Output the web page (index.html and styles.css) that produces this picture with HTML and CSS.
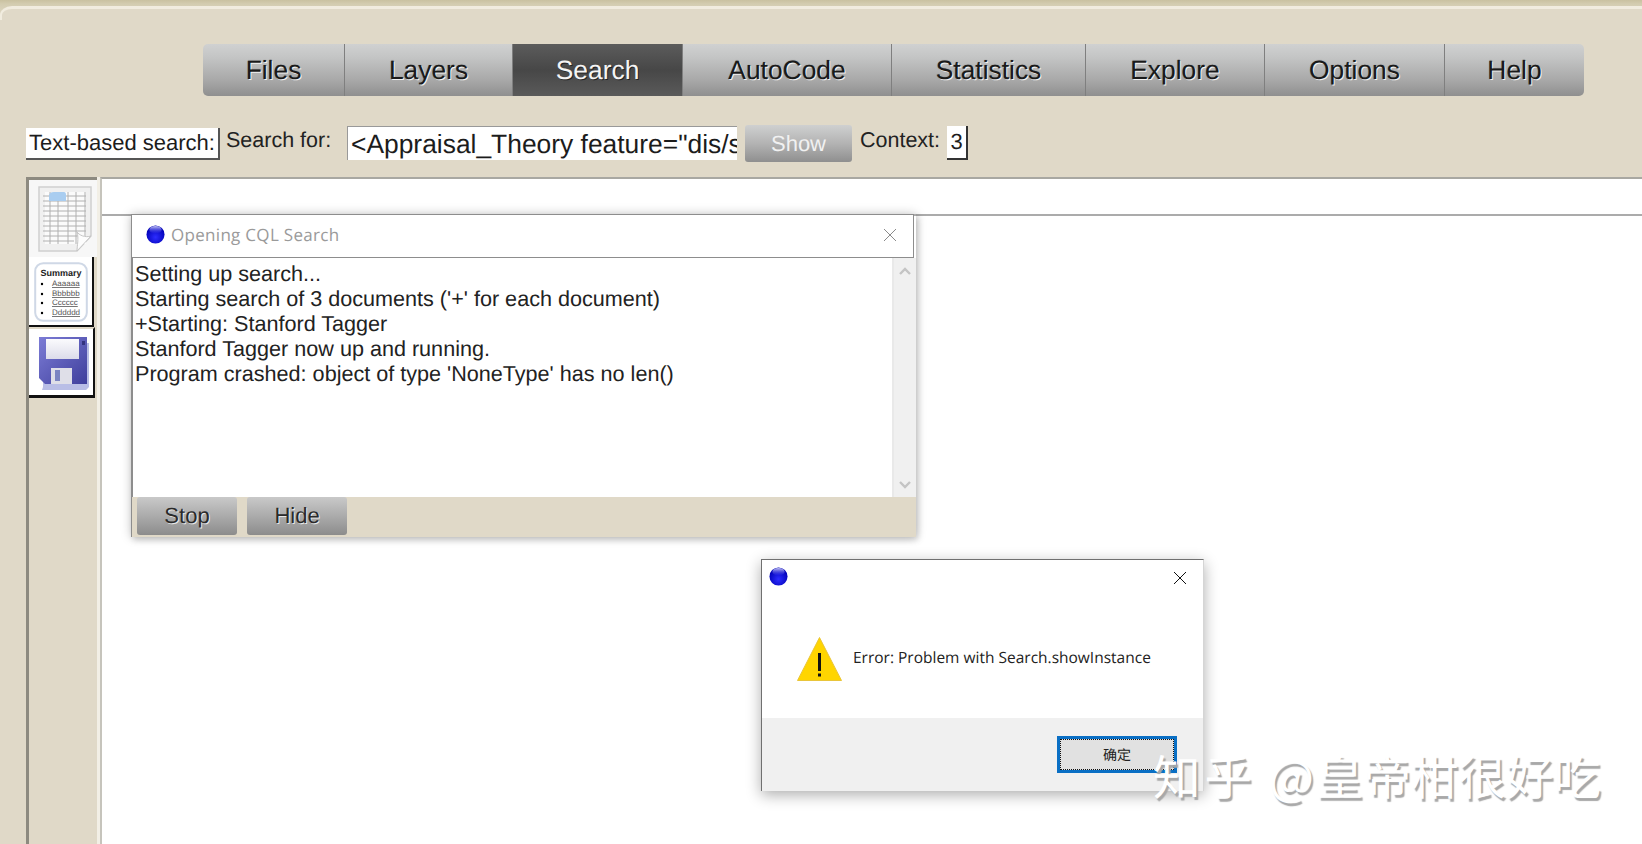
FILE: index.html
```html
<!DOCTYPE html>
<html lang="en">
<head>
<meta charset="utf-8">
<title>CQL Search</title>
<link rel="stylesheet" href="styles.css">
</head>
<body>
<div class="app">
  <div class="topstrip"></div>
  <nav class="tabs">
    <div class="tab w-files">Files</div>
    <div class="tab w-layers">Layers</div>
    <div class="tab active w-search">Search</div>
    <div class="tab w-autocode">AutoCode</div>
    <div class="tab w-statistics">Statistics</div>
    <div class="tab w-explore">Explore</div>
    <div class="tab w-options">Options</div>
    <div class="tab w-help">Help</div>
  </nav>
  <div class="toolbar">
    <div class="modebtn">Text-based search:</div>
    <div class="label label-for">Search for:</div>
    <div class="searchbox">&lt;Appraisal_Theory feature="dis/s</div>
    <div class="showbtn">Show</div>
    <div class="label label-context">Context:</div>
    <div class="contextbox">3</div>
  </div>
  <div class="workspace">
    <div class="sidetabs">
      <div class="sidetab selected">
        <svg class="sheet" viewBox="0 0 54 66" width="54" height="66">
          <path d="M1 1H53V50L39 65H1Z" fill="#f0f0f0" stroke="#cfcfcf" stroke-width="1.5"/>
          <rect x="7" y="6" width="41" height="52" fill="#fbfbfb"/>
          <path d="M12 6V58M20 6V58M30 6V58M38 6V58M47 6V50M5 10H48M5 15H48M5 20H48M5 25H48M5 30H48M5 35H48M5 40H48M5 45H48M5 50H42M5 55H36" stroke="#b0b0b0" stroke-width="1" fill="none"/>
          <path d="M11 10Q11 6 16 6H26Q28 6 28 9V15H11Z" fill="#a9cdf0"/>
          <path d="M53 50C47 52 41 49 39 46C41 52 39 60 39 65Z" fill="#fdfdfd" stroke="#c6c6c6"/>
        </svg>
      </div>
      <div class="sidetab second">
        <svg class="summary" viewBox="0 0 54 60" width="54" height="60">
          <rect x="1.200" y="1.200" width="51.600" height="57.600" rx="8" fill="#fff" stroke="#cfd8e6" stroke-width="2"/>
          <text class="sum-title" x="27" y="14" text-anchor="middle">Summary</text>
          <circle cx="8" cy="22" r="1.200"/><text class="sum-line" x="18" y="24">Aaaaaa</text>
          <circle cx="8" cy="32" r="1.200"/><text class="sum-line" x="18" y="34">Bbbbbb</text>
          <circle cx="8" cy="41" r="1.200"/><text class="sum-line" x="18" y="43">Cccccc</text>
          <circle cx="8" cy="51" r="1.200"/><text class="sum-line" x="18" y="53">Dddddd</text>
        </svg>
      </div>
      <div class="sidetab third">
        <svg class="floppy" viewBox="0 0 50 54" width="50" height="54">
          <defs>
            <linearGradient id="fl" x1="0" y1="0" x2="1" y2="1">
              <stop offset="0" stop-color="#7c7cd6"/>
              <stop offset="1" stop-color="#3f3f9c"/>
            </linearGradient>
            <linearGradient id="lab" x1="0" y1="0" x2="0" y2="1">
              <stop offset="0" stop-color="#fbfbfd"/>
              <stop offset="1" stop-color="#dcdcea"/>
            </linearGradient>
          </defs>
          <path d="M3 53H47L50 50V6H4V50Z" fill="#b9bee6"/>
          <path d="M0 0H48V47H6L0 41Z" fill="url(#fl)"/>
          <rect x="7" y="2" width="33" height="20" fill="url(#lab)"/>
          <rect x="12" y="31" width="21" height="16" fill="#dfdfe8"/>
          <rect x="16" y="33" width="5" height="11" fill="#7c85c2"/>
          <rect x="43" y="4" width="3" height="4" fill="#33337f"/>
        </svg>
      </div>
    </div>
    <div class="stage">
      <div class="stagehead"></div>
    </div>
  </div>
</div>

<section class="cql">
  <header class="cql-title">
    <svg class="orb" viewBox="0 0 20 20" width="19" height="19">
      <defs>
        <radialGradient id="orbA" cx="50%" cy="65%" r="60%">
          <stop offset="0" stop-color="#2c2cff"/>
          <stop offset="1" stop-color="#0000b4"/>
        </radialGradient>
        <linearGradient id="orbH" x1="0" y1="0" x2="0" y2="1">
          <stop offset="0" stop-color="#c8c8f4"/>
          <stop offset="1" stop-color="#5a5af0" stop-opacity="0"/>
        </linearGradient>
      </defs>
      <circle cx="10" cy="10" r="9.500" fill="url(#orbA)"/>
      <ellipse cx="10" cy="5" rx="6.500" ry="4" fill="url(#orbH)"/>
    </svg>
    <span class="cql-name">Opening CQL Search</span>
    <svg class="closex" viewBox="0 0 14 14" width="14" height="14"><path d="M1 1L13 13M13 1L1 13" stroke="#8a8a8a" stroke-width="1" fill="none"/></svg>
  </header>
  <div class="cql-main">
    <div class="cql-log">
      <div>Setting up search...</div>
      <div>Starting search of 3 documents ('+' for each document)</div>
      <div>+Starting: Stanford Tagger</div>
      <div>Stanford Tagger now up and running.</div>
      <div>Program crashed: object of type 'NoneType' has no len()</div>
    </div>
    <div class="cql-scroll">
      <svg viewBox="0 0 12 8" width="12" height="8"><path d="M1 7L6 2L11 7" stroke="#c4c4c4" stroke-width="2.400" fill="none"/></svg>
      <svg viewBox="0 0 12 8" width="12" height="8"><path d="M1 1L6 6L11 1" stroke="#c4c4c4" stroke-width="2.400" fill="none"/></svg>
    </div>
  </div>
  <footer class="cql-foot">
    <div class="footbtn">Stop</div>
    <div class="footbtn">Hide</div>
  </footer>
</section>

<section class="errbox">
  <header class="err-title">
    <svg class="orb" viewBox="0 0 20 20" width="19" height="19">
      <circle cx="10" cy="10" r="9.500" fill="url(#orbA)"/>
      <ellipse cx="10" cy="5" rx="6.500" ry="4" fill="url(#orbH)"/>
    </svg>
    <svg class="closex" viewBox="0 0 14 14" width="14" height="14"><path d="M1 1L13 13M13 1L1 13" stroke="#111" stroke-width="1" fill="none"/></svg>
  </header>
  <div class="err-body">
    <svg class="warn" viewBox="0 0 45 44" width="45" height="44">
      <path d="M22.500 0.500L44.500 43.500H0.500Z" fill="#ffd500" stroke="#e9c53a" stroke-width="1"/>
      <rect x="21" y="16" width="3" height="18" fill="#111"/>
      <rect x="21" y="36.500" width="3" height="3" fill="#111"/>
    </svg>
    <div class="err-text">Error: Problem with Search.showInstance</div>
  </div>
  <footer class="err-foot">
    <div class="okbtn"><span class="okinner">确定</span></div>
  </footer>
</section>

<div class="watermark"><span class="wm-brand">知乎</span><span class="wm-at">@</span><span class="wm-name">皇帝柑很好吃</span></div>
</body>
</html>
```
FILE: styles.css
```css
* { box-sizing: border-box; }
html, body { margin: 0; padding: 0; }
body {
  width: 1642px;
  height: 844px;
  overflow: hidden;
  position: relative;
  background: #e0d9c8;
  font-family: "Liberation Sans", Arial, sans-serif;
  color: #1c1c1c;
  text-rendering: geometricPrecision;
}
.app { height: 844px; display: flex; flex-direction: column; }

.topstrip {
  height: 14px;
  margin-bottom: -6px;
  background: linear-gradient(#c9c1a0, #d3ccb0 4px, #ddd6c2 14px);
}
.topstrip::after {
  content: "";
  display: block;
  height: 11px;
  margin-top: 3px;
  position: relative;
  top: 3px;
  background: #e0d9c8;
  border-top: 3px solid #f1ecdf;
  border-left: 2px solid #f1ecdf;
  border-top-left-radius: 12px 9px;
}

.tabs { display: flex; height: 52px; margin: 36px 0 0 203px; width: 1381px; }
.tab {
  display: flex; align-items: center; justify-content: center;
  font-size: 26.400px;
  color: #1a1a1a;
  text-shadow: 1px 1px 0 #f2f2f2, 0 0 1px rgba(0,0,0,.45);
  background: linear-gradient(#d0d1d1, #c4c5c5 25%, #a8a8a8 70%, #8f8f8f);
  border-right: 1px solid #7f7f7f;
}
.tab.active {
  background: linear-gradient(#5c5c5c, #474747 50%, #5a5a5a);
  color: #f4f4f4;
  text-shadow: 1px 1px 0 #222;
}
.w-files { width: 142px; border-radius: 5px 0 0 5px; }
.w-layers { width: 168px; }
.w-search { width: 170px; }
.w-autocode { width: 209px; }
.w-statistics { width: 194px; }
.w-explore { width: 179px; }
.w-options { width: 180px; }
.w-help { width: 139px; border-right: 0; border-radius: 0 5px 5px 0; }

.toolbar { display: flex; align-items: center; height: 38px; margin: 28px 0 0 26px; }
.modebtn {
  width: 194px; height: 32px;
  position: relative; top: 1px;
  display: flex; align-items: center; justify-content: center;
  background: #fff;
  font-size: 22px;
  border-right: 2px solid #555;
  border-bottom: 2px solid #555;
  white-space: nowrap;
}
.label { font-size: 21.500px; color: #222; position: relative; top: -3px; white-space: nowrap; }
.label-for { margin-left: 6px; width: 121px; }
.searchbox {
  width: 390px; height: 34px;
  padding: 1px 0 0 3px;
  background: #fff;
  font-size: 26.400px; line-height: 33px;
  border-top: 1px solid #999;
  border-left: 1px solid #999;
  white-space: nowrap; overflow: hidden;
}
.showbtn {
  width: 107px; height: 37px; margin-left: 8px;
  padding-top: 2px;
  display: flex; align-items: center; justify-content: center;
  font-size: 22px; color: #f1f1f1;
  background: linear-gradient(#cfd0d0, #b3b3b3 50%, #8f8f8f);
  border-radius: 3px;
}
.label-context { margin-left: 8px; width: 87px; }
.contextbox {
  width: 21px; height: 34px;
  display: flex; align-items: center; justify-content: center;
  background: #fff; font-size: 22px;
  border-right: 2px solid #333; border-bottom: 2px solid #333;
}

.workspace { flex: 1; display: flex; margin: 15px 0 0 26px; min-height: 0; }
.sidetabs {
  width: 71px;
  border-left: 3px solid #8d8a80;
  display: flex; flex-direction: column; align-items: flex-start;
}
.sidetab { display: flex; align-items: center; justify-content: center; background: #fff; flex: none; }
.sidetab.selected {
  width: 68px; height: 80px;
  padding-left: 3px;
  background: #f7f7f7;
  border-top: 3px solid #8d8a80;
}
.sidetab.second {
  width: 65px; height: 70px;
  padding-top: 2px;
  border-right: 2px solid #111; border-bottom: 2px solid #111;
}
.sidetab.third {
  width: 66px; height: 71px;
  padding: 3px 0 0 5px;
  border-right: 2px solid #111; border-bottom: 3px solid #111; border-top: 2px solid #e0d9c8;
}
.sum-title { font: bold 9px "Liberation Sans", sans-serif; fill: #222; }
.sum-line { font: 8px "Liberation Sans", sans-serif; fill: #555; text-decoration: underline; }

.stage {
  flex: 1;
  margin-left: 3px;
  background: #fff;
  border-left: 2px solid #c6c4bc;
  border-top: 2px solid #a9a8a2;
  box-shadow: -3px 0 0 #f2efe6;
}
.stagehead { height: 37px; border-bottom: 2px solid #ababab; }

.cql {
  position: absolute; left: 131px; top: 214px;
  width: 785px; height: 323px;
  display: flex; flex-direction: column;
  box-shadow: 0 0 10px rgba(0,0,0,.22), 2px 3px 6px rgba(0,0,0,.15);
}
.cql-title {
  height: 44px; width: 783px;
  flex: none;
  display: flex; align-items: center;
  background: #fff;
  border: 1px solid #8d8d8d;
  padding: 0 16px 4px 14px;
}
.cql-title .closex { position: relative; top: 1px; }
.cql-name {
  margin-left: 6px;
  font-family: "Open Sans", sans-serif;
  font-size: 17px;
  color: #9a9a9a;
  letter-spacing: .3px;
}
.closex { margin-left: auto; }
.cql-main { flex: 1; display: flex; min-height: 0; }
.cql-log {
  flex: 1;
  background: #fff;
  border-left: 2px solid #8d8d8d;
  padding: 3px 0 0 2px;
  font-size: 21.600px; line-height: 25px; color: #222;
  white-space: nowrap;
}
.cql-scroll {
  width: 24px;
  background: #f0f0f0;
  border-left: 2px solid #e9e9e9;
  display: flex; flex-direction: column; justify-content: space-between; align-items: center;
  padding: 9px 0 8px;
}
.cql-foot {
  height: 40px;
  flex: none;
  display: flex; gap: 10px;
  padding-left: 5px;
  background: #e0d9c8;
  border-left: 1px solid #8d8d8d;
}
.footbtn {
  width: 100px; height: 38px;
  display: flex; align-items: center; justify-content: center;
  font-size: 22px; color: #2a2a2a;
  text-shadow: 1px 1px 0 #e8e8e8;
  background: linear-gradient(#c9c9c9, #ababab 50%, #8c8c8c);
  border-radius: 3px;
}

.errbox {
  position: absolute; left: 761px; top: 559px;
  width: 443px; height: 232px;
  display: flex; flex-direction: column;
  background: #fff;
  border: 1px solid #707070; border-bottom: 0; border-right-color: #d5d5d5;
  box-shadow: 0 4px 14px rgba(0,0,0,.32);
}
.err-title { height: 35px; display: flex; align-items: flex-start; padding: 7px 16px 0 7px; flex: none; }
.err-title .closex { margin-top: 4px; }
.err-body { flex: 1; display: flex; align-items: center; padding: 4px 0 0 35px; }
.warn { flex: none; }
.err-text {
  margin-left: 11px;
  font-family: "Open Sans", sans-serif;
  font-size: 15.500px; color: #222;
  white-space: nowrap;
  position: relative; top: -2px;
}
.err-foot {
  height: 73px; flex: none;
  background: #f0f0f0;
  display: flex; justify-content: flex-end; align-items: flex-start;
  padding: 18px 26px 0 0;
}
.okbtn {
  width: 120px; height: 37px;
  border: 3px solid #0a6fc4;
  background: #e1e1e1;
  display: flex;
}
.okinner {
  flex: 1;
  display: flex; align-items: center; justify-content: center;
  border: 1px dotted #111;
  font-family: "Noto Sans CJK SC", sans-serif;
  font-size: 14px; color: #222;
}

.watermark {
  position: absolute; left: 1153px; top: 741px;
  display: flex; align-items: center;
  font-family: "Noto Sans CJK SC", sans-serif;
  font-size: 47.500px; line-height: 68px;
  color: #fff;
  text-shadow: 2px 3px 1px #a8a8a8;
  white-space: nowrap;
}
.wm-brand { letter-spacing: 4px; width: 116px; }
.wm-at { width: 47px; }
```
